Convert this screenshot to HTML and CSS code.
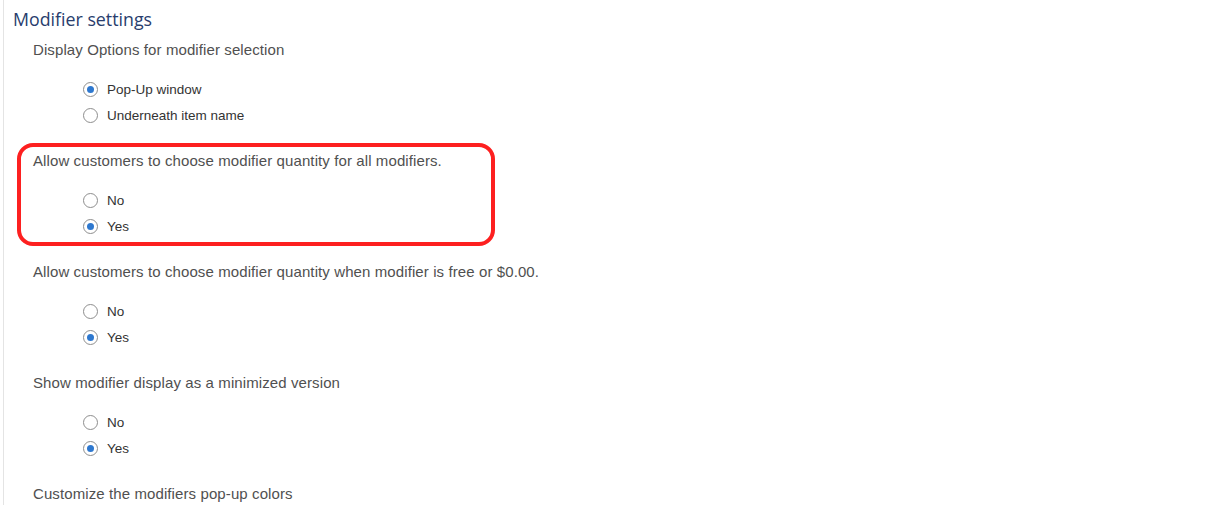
FILE: index.html
```html
<!DOCTYPE html>
<html lang="en">
<head>
<meta charset="utf-8">
<title>Modifier settings</title>
<link rel="stylesheet" href="styles.css">
</head>
<body>
<div class="panel">
  <h2 class="title">Modifier settings</h2>
  <div class="settings">
    <div class="group">
      <div class="label">Display Options for modifier selection</div>
      <div class="options">
        <label class="opt"><input type="radio" name="g1" checked><span>Pop-Up window</span></label>
        <label class="opt"><input type="radio" name="g1"><span>Underneath item name</span></label>
      </div>
    </div>
    <div class="group highlight">
      <div class="label">Allow customers to choose modifier quantity for all modifiers.</div>
      <div class="options">
        <label class="opt"><input type="radio" name="g2"><span>No</span></label>
        <label class="opt"><input type="radio" name="g2" checked><span>Yes</span></label>
      </div>
    </div>
    <div class="group">
      <div class="label">Allow customers to choose modifier quantity when modifier is free or $0.00.</div>
      <div class="options">
        <label class="opt"><input type="radio" name="g3"><span>No</span></label>
        <label class="opt"><input type="radio" name="g3" checked><span>Yes</span></label>
      </div>
    </div>
    <div class="group">
      <div class="label">Show modifier display as a minimized version</div>
      <div class="options">
        <label class="opt"><input type="radio" name="g4"><span>No</span></label>
        <label class="opt"><input type="radio" name="g4" checked><span>Yes</span></label>
      </div>
    </div>
    <div class="group">
      <div class="label">Customize the modifiers pop-up colors</div>
    </div>
  </div>
</div>
</body>
</html>
```
FILE: styles.css
```css
html, body {
  margin: 0;
  padding: 0;
  background: #ffffff;
  overflow: hidden;
}

body {
  font-family: "Liberation Sans", Arial, sans-serif;
}

.panel {
  margin-left: 3px;
  border-left: 1px solid #e4e4e4;
  padding: 7px 0 0 9px;
  min-height: 505px;
  box-sizing: border-box;
}

.title {
  margin: 0;
  font-family: "Open Sans", "Liberation Sans", sans-serif;
  font-weight: 400;
  font-size: 17.8px;
  line-height: 24px;
  color: #283d6d;
}

.settings {
  padding: 9px 0 0 20px;
  display: flex;
  flex-direction: column;
  gap: 22px;
}

.group {
  position: relative;
}

.label {
  font-size: 15px;
  letter-spacing: 0.1px;
  line-height: 20px;
  color: #505050;
}

.options {
  margin-top: 16px;
  padding-left: 50px;
  display: flex;
  flex-direction: column;
}

.opt {
  display: flex;
  align-items: center;
  height: 26.5px;
  font-size: 13.5px;
  color: #333333;
}

.opt input {
  -webkit-appearance: none;
  appearance: none;
  margin: 0 9px 0 0;
  width: 15px;
  height: 15px;
  border: 1px solid #8e8e8e;
  border-radius: 50%;
  background: #ffffff;
  box-sizing: border-box;
  display: grid;
  place-items: center;
  flex: none;
}

.opt input:checked::before {
  content: "";
  width: 7px;
  height: 7px;
  border-radius: 50%;
  background: #2e78cf;
}

.highlight::after {
  content: "";
  position: absolute;
  left: -16px;
  top: -8px;
  bottom: -6px;
  width: 478px;
  border: 4px solid #fd2020;
  border-radius: 16px;
  box-sizing: border-box;
  pointer-events: none;
}
```
